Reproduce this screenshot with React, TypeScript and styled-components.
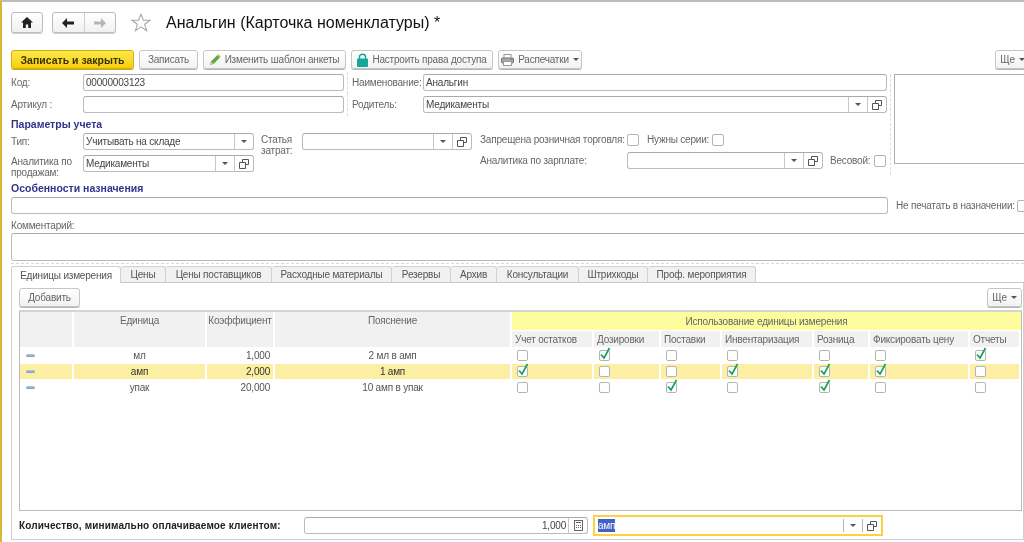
import React from 'react'
import styled, { createGlobalStyle } from 'styled-components'

const GlobalStyle = createGlobalStyle`
  html, body {
    margin: 0;
    padding: 0;
    background: #fff;
  }
  body {
    font-family: "Liberation Sans", Arial, sans-serif;
    font-size: 10px;
    letter-spacing: -0.2px;
    color: #555;
  }
`

const Page = styled.div`
  box-sizing: border-box;
  width: 1024px;
  height: 542px;
  overflow: hidden;
  background: #fff;
  border-top: 2px solid #bcbcbc;
  border-left: 2px solid #d6b92e;
  padding-left: 9px;
  filter: blur(0.45px);
`

const NavBar = styled.div`
  display: flex;
  align-items: center;
  height: 21px;
  margin-top: 10px;
`

const NavButton = styled.div<{ $w: number }>`
  box-sizing: border-box;
  width: ${p => p.$w}px;
  height: 21px;
  display: flex;
  align-items: center;
  justify-content: center;
  border: 1px solid #bdbdbd;
  border-radius: 3px;
  background: linear-gradient(#fff, #f1f1f1);
  box-shadow: 0 1px 0 #cfcfcf;
`

const NavGroup = styled.div`
  display: flex;
  width: 64px;
  margin-left: 9px;
  box-sizing: border-box;
  border: 1px solid #bdbdbd;
  border-radius: 3px;
  height: 21px;
  background: linear-gradient(#fff, #f1f1f1);
  box-shadow: 0 1px 0 #cfcfcf;
`

const NavCell = styled.div<{ $divided?: boolean }>`
  flex: 1;
  display: flex;
  align-items: center;
  justify-content: center;
  border-left: ${p => (p.$divided ? '1px solid #d0d0d0' : 'none')};
`

const StarBox = styled.div`
  margin-left: 15px;
  display: flex;
`

const Title = styled.h1`
  margin: 0 0 0 15px;
  font-size: 16px;
  font-weight: 400;
  letter-spacing: 0;
  color: #111;
  white-space: nowrap;
`

const Toolbar = styled.div`
  display: flex;
  align-items: center;
  height: 19px;
  margin-top: 17px;
  gap: 5px;
`

const Btn = styled.div<{ $w: number; $push?: boolean }>`
  box-sizing: border-box;
  flex: none;
  width: ${p => p.$w}px;
  height: 19px;
  margin-left: ${p => (p.$push ? 'auto' : '0')};
  display: flex;
  align-items: center;
  justify-content: center;
  gap: 4px;
  border: 1px solid #c6c6c6;
  border-radius: 3px;
  background: linear-gradient(#fff, #f2f2f2);
  box-shadow: 0 1px 0 #b4b4b4;
  color: #666;
  white-space: nowrap;
`

const PrimaryBtn = styled(Btn)`
  border-color: #d2ae10;
  background: linear-gradient(#fde84a, #f6cf10);
  color: #3a3200;
  font-weight: 700;
  font-size: 10.5px;
  letter-spacing: 0;
  box-shadow: 0 1px 0 #c9a90f;
`

// the window is narrower than the form, so this one runs off the right edge
const ClippedBtn = styled(Btn)`
  margin-right: -6px;
`

const Caret = styled.span`
  display: inline-block;
  width: 0;
  height: 0;
  border-left: 3px solid transparent;
  border-right: 3px solid transparent;
  border-top: 3px solid #555;
`

const Top = styled.div`
  display: flex;
  margin-top: 5px;
`

const FormColumn = styled.div`
  width: 877px;
  flex: none;
`

const Row = styled.div<{ $mt?: number; $h?: number }>`
  display: flex;
  align-items: center;
  height: ${p => p.$h ?? 17}px;
  margin-top: ${p => p.$mt ?? 0}px;
`

const Label = styled.div<{ $w?: number; $ml?: number }>`
  flex: none;
  width: ${p => (p.$w ? `${p.$w}px` : 'auto')};
  margin-left: ${p => p.$ml ?? 0}px;
  color: #666;
  line-height: 12px;
  white-space: nowrap;
`

const TallLabel = styled(Label)`
  align-self: flex-start;
  margin-top: 1px;
  line-height: 11px;
`

const VSep = styled.div`
  flex: none;
  width: 0;
  height: 22px;
  margin: -2px 4px -3px 3px;
  border-left: 1px dashed #ddd;
`

const Field = styled.div<{ $w: number; $h?: number }>`
  box-sizing: border-box;
  flex: none;
  display: flex;
  align-items: stretch;
  width: ${p => p.$w}px;
  height: ${p => p.$h ?? 17}px;
  border: 1px solid #bbb;
  border-top-color: #a9a9a9;
  border-radius: 3px;
  background: #fff;
  color: #444;
`

const FieldText = styled.div<{ $right?: boolean }>`
  flex: 1;
  min-width: 0;
  padding: 0 2px;
  display: flex;
  align-items: center;
  justify-content: ${p => (p.$right ? 'flex-end' : 'flex-start')};
`

const FieldBtn = styled.div`
  flex: none;
  width: 18px;
  display: flex;
  align-items: center;
  justify-content: center;
  border-left: 1px solid #c8c8c8;
`

const ImageBox = styled.div`
  box-sizing: border-box;
  width: 130px;
  height: 90px;
  margin-left: 5px;
  flex: none;
  border-left: 1px solid #b0b0b0;
  border-top: 1px solid #b0b0b0;
  border-bottom: 1px solid #b0b0b0;
  background: #fff;
`

const ImageSep = styled.div`
  flex: none;
  height: 101px;
  width: 0;
  margin-left: 2px;
  margin-right: -2px;
  border-left: 1px dashed #ddd;
`

const SectionTitle = styled.div<{ $mt: number }>`
  margin-top: ${p => p.$mt}px;
  color: #32328c;
  font-weight: 700;
  font-size: 10.5px;
  letter-spacing: 0;
  line-height: 12px;
`

const Params = styled.div`
  display: flex;
  margin-top: 2px;
`

const ParamCol = styled.div<{ $w: number; $ml?: number; $pt?: number }>`
  flex: none;
  width: ${p => p.$w}px;
  margin-left: ${p => p.$ml ?? 0}px;
  padding-top: ${p => p.$pt ?? 0}px;
`

const Box = styled.span<{ $s?: number }>`
  box-sizing: border-box;
  position: relative;
  flex: none;
  display: inline-block;
  width: ${p => p.$s ?? 12}px;
  height: ${p => p.$s ?? 12}px;
  border: 1px solid #b4b4b4;
  border-radius: 2px;
  background: #fff;
`

const CheckMark = styled.svg`
  position: absolute;
  left: -1px;
  top: -5px;
`

const Dashed = styled.div`
  margin-top: 2px;
  border-top: 1px dashed #d8d8d8;
`

const Tabs = styled.div`
  display: flex;
  margin-top: 2px;
  height: 17px;
`

const Tab = styled.div<{ $w: number; $active?: boolean }>`
  box-sizing: border-box;
  flex: none;
  width: ${p => p.$w}px;
  display: flex;
  align-items: center;
  justify-content: center;
  color: #555;
  white-space: nowrap;
  border: 1px solid #d0d0d0;
  border-left-width: ${p => (p.$active ? 1 : 0)}px;
  border-bottom: ${p => (p.$active ? 'none' : '1px solid #c8c8c8')};
  border-radius: 3px 3px 0 0;
  background: ${p => (p.$active ? '#fff' : '#f1f1f1')};
`

const TabRest = styled.div`
  flex: 1;
  border-bottom: 1px solid #c8c8c8;
`

const Panel = styled.div`
  box-sizing: border-box;
  width: 1013px;
  height: 257px;
  border: 1px solid #d0d0d0;
  border-top: none;
  padding: 5px 1px 0 7px;
`

const PanelBar = styled.div`
  display: flex;
  height: 18px;
`

const Grid = styled.div`
  box-sizing: border-box;
  width: 1003px;
  height: 201px;
  margin-top: 4px;
  border: 1px solid #bcbcbc;
  border-top-color: #d4d4d4;
  border-top-width: 2px;
`

const Columns = '54px 133px 68px 237px 82px 67px 61px 92px 56px 100px 51px'

const HeadGrid = styled.div`
  display: grid;
  grid-template-columns: ${Columns};
  grid-template-rows: 18px 17px;
  height: 35px;
`

const HeadCell = styled.div`
  grid-row: span 2;
  box-sizing: border-box;
  padding-top: 3px;
  text-align: center;
  background: #f1f1f1;
  border-right: 2px solid #fff;
  color: #666;
`

const GroupCell = styled.div`
  grid-column: 5 / span 7;
  display: flex;
  align-items: center;
  justify-content: center;
  background: #fdfd9d;
  color: #666;
`

const SubCell = styled.div`
  box-sizing: border-box;
  display: flex;
  align-items: center;
  padding-left: 3px;
  background: #f1f1f1;
  border-right: 2px solid #fff;
  border-top: 1px solid #fff;
  color: #666;
  white-space: nowrap;
`

const DataRow = styled.div`
  display: grid;
  grid-template-columns: ${Columns};
  height: 16px;
`

const DataCell = styled.div<{ $align?: string; $on?: boolean }>`
  box-sizing: border-box;
  height: 15px;
  margin-top: 1px;
  display: flex;
  align-items: center;
  justify-content: ${p => p.$align ?? 'center'};
  padding: 0 3px;
  background: ${p => (p.$on ? '#fcefa4' : '#fff')};
  border-right: 2px solid #fff;
  color: ${p => (p.$on ? '#333' : '#555')};
`

const BoxCell = styled(DataCell)`
  padding-left: 5px;
  justify-content: flex-start;
`

const Minus = styled.span`
  margin-left: 3px;
  width: 9px;
  height: 3px;
  border-radius: 2px;
  background: linear-gradient(#b4c6dc, #7f9cbd);
`

const Footer = styled.div`
  display: flex;
  align-items: center;
  height: 21px;
  margin-top: 4px;
`

const FooterLabel = styled.div`
  flex: none;
  width: 285px;
  color: #222;
  font-weight: 700;
  font-size: 10px;
  letter-spacing: 0.15px;
  white-space: nowrap;
`

const FocusField = styled.div`
  box-sizing: border-box;
  flex: none;
  display: flex;
  align-items: stretch;
  width: 290px;
  height: 21px;
  margin-left: 5px;
  padding: 2px 0;
  border: 2px solid #fbd341;
  background: #fff;
  color: #444;
`

const FocusText = styled(FieldText)`
  padding-left: 3px;
`

const Selected = styled.span`
  background: #3f62c4;
  color: #fff;
  padding: 1px 0;
`

const FocusBtn = styled(FieldBtn)`
  border-left: 1px solid #b5b5b5;
`

const OpenIcon = () => (
  <svg width="10" height="10" viewBox="0 0 10 10" fill="none" stroke="#555" strokeWidth="1">
    <path d="M3.5 0.5H9.5V5.5H3.5Z" />
    <path d="M.5 3.5H6.5V9.5H.5Z" fill="#fff" />
  </svg>
)

const Pick = () => (
  <>
    <FieldBtn>
      <Caret />
    </FieldBtn>
    <FieldBtn>
      <OpenIcon />
    </FieldBtn>
  </>
)

const Tick = () => (
  <CheckMark width="13" height="15" viewBox="0 0 13 15" fill="none">
    <path d="M2 8.5L5 12L10.5 2" stroke="#17a356" strokeWidth="1.7" />
  </CheckMark>
)

const HomeIcon = () => (
  <svg width="12" height="11" viewBox="0 0 12 11">
    <path d="M6 0L0 5.5H2V11H4.8V7.5H7.2V11H10V5.5H12Z" fill="#222" />
  </svg>
)

const ArrowIcon = ({ dir, color }: { dir: 'l' | 'r'; color: string }) => (
  <svg width="12" height="10" viewBox="0 0 12 10">
    <path
      d={dir === 'l' ? 'M0 5L5 0V3.5H12V6.5H5V10Z' : 'M12 5L7 0V3.5H0V6.5H7V10Z'}
      fill={color}
    />
  </svg>
)

const StarIcon = () => (
  <svg width="20" height="19" viewBox="0 0 20 19" fill="#fff" stroke="#a8a8a8" strokeWidth="1.1">
    <path d="M10 1.2L12.4 7.3H18.9L13.7 11.3L15.6 17.7L10 13.9L4.4 17.7L6.3 11.3L1.1 7.3H7.6Z" />
  </svg>
)

const PencilIcon = () => (
  <svg width="11" height="11" viewBox="0 0 11 11">
    <path d="M0 11L1 7.5L7.5 1L10 3.5L3.5 10Z" fill="#5fa83a" />
    <path d="M7.5 1L8.5 0L11 2.5L10 3.5Z" fill="#b7cf55" />
    <path d="M0 11L1 7.5L3.5 10Z" fill="#d8c9a0" />
  </svg>
)

const LockIcon = () => (
  <svg width="11" height="14" viewBox="0 0 11 14">
    <path d="M2.5 6V3.5C2.5 0.5 8.5 0.5 8.5 3.5V6" fill="none" stroke="#14a090" strokeWidth="1.4" />
    <rect x="0" y="5.5" width="11" height="8.5" rx="1" fill="#14a89a" />
  </svg>
)

const PrinterIcon = () => (
  <svg width="13" height="12" viewBox="0 0 13 12">
    <rect x="3" y="0.5" width="7" height="4" fill="#fff" stroke="#999" />
    <rect x="0.5" y="4" width="12" height="5" rx="1" fill="#a9a9a9" stroke="#777" />
    <rect x="2.5" y="7.5" width="8" height="4" fill="#fff" stroke="#999" />
    <rect x="9.5" y="5" width="2" height="1" fill="#d9534f" />
  </svg>
)

const CalcIcon = () => (
  <svg width="9" height="11" viewBox="0 0 9 11" fill="none" stroke="#666">
    <rect x="0.5" y="0.5" width="8" height="10" />
    <path d="M2 2.5H7" />
    <path d="M2 5.5H3M4 5.5H5M6 5.5H7M2 7.5H3M4 7.5H5M6 7.5H7" />
  </svg>
)

const tabs = [
  { title: 'Единицы измерения', w: 110, active: true },
  { title: 'Цены', w: 45 },
  { title: 'Цены поставщиков', w: 106 },
  { title: 'Расходные материалы', w: 120 },
  { title: 'Резервы', w: 59 },
  { title: 'Архив', w: 46 },
  { title: 'Консультации', w: 82 },
  { title: 'Штрихкоды', w: 69 },
  { title: 'Проф. мероприятия', w: 108 },
]

const useColumns = ['Учет остатков', 'Дозировки', 'Поставки', 'Инвентаризация', 'Розница', 'Фиксировать цену', 'Отчеты']

const rows = [
  { unit: 'мл', k: '1,000', note: '2 мл в амп', flags: [0, 1, 0, 0, 0, 0, 1] },
  { unit: 'амп', k: '2,000', note: '1 амп', flags: [1, 0, 0, 1, 1, 1, 0], on: true },
  { unit: 'упак', k: '20,000', note: '10 амп в упак', flags: [0, 0, 1, 0, 1, 0, 0] },
]

const App = () => {
  return (
    <Page>
      <GlobalStyle />
      <NavBar>
        <NavButton $w={32}>
          <HomeIcon />
        </NavButton>
        <NavGroup>
          <NavCell>
            <ArrowIcon dir="l" color="#222" />
          </NavCell>
          <NavCell $divided>
            <ArrowIcon dir="r" color="#b5b5b5" />
          </NavCell>
        </NavGroup>
        <StarBox>
          <StarIcon />
        </StarBox>
        <Title>Анальгин (Карточка номенклатуры) *</Title>
      </NavBar>

      <Toolbar>
        <PrimaryBtn $w={123}>Записать и закрыть</PrimaryBtn>
        <Btn $w={59}>Записать</Btn>
        <Btn $w={143}>
          <PencilIcon />
          Изменить шаблон анкеты
        </Btn>
        <Btn $w={142}>
          <LockIcon />
          Настроить права доступа
        </Btn>
        <Btn $w={84}>
          <PrinterIcon />
          Распечатки
          <Caret />
        </Btn>
        <ClippedBtn $w={35} $push>
          Ще
          <Caret />
        </ClippedBtn>
      </Toolbar>

      <Top>
        <FormColumn>
          <Row>
            <Label $w={72}>Код:</Label>
            <Field $w={261}>
              <FieldText>00000003123</FieldText>
            </Field>
            <VSep />
            <Label $w={71}>Наименование:</Label>
            <Field $w={464}>
              <FieldText>Анальгин</FieldText>
            </Field>
          </Row>
          <Row $mt={5}>
            <Label $w={72}>Артикул :</Label>
            <Field $w={261} />
            <VSep />
            <Label $w={71}>Родитель:</Label>
            <Field $w={464}>
              <FieldText>Медикаменты</FieldText>
              <Pick />
            </Field>
          </Row>
          <SectionTitle $mt={5}>Параметры учета</SectionTitle>
          <Params>
            <ParamCol $w={243}>
              <Row $mt={1}>
                <Label $w={72}>Тип:</Label>
                <Field $w={171}>
                  <FieldText>Учитывать на складе</FieldText>
                  <FieldBtn>
                    <Caret />
                  </FieldBtn>
                </Field>
              </Row>
              <Row $mt={5}>
                <TallLabel $w={72}>
                  Аналитика по
                  <br />
                  продажам:
                </TallLabel>
                <Field $w={171}>
                  <FieldText>Медикаменты</FieldText>
                  <Pick />
                </Field>
              </Row>
            </ParamCol>
            <ParamCol $w={211} $ml={7} $pt={1}>
              <Row>
                <TallLabel $w={41}>
                  Статья
                  <br />
                  затрат:
                </TallLabel>
                <Field $w={170}>
                  <FieldText />
                  <Pick />
                </Field>
              </Row>
            </ParamCol>
            <ParamCol $w={407} $ml={8} $pt={2}>
              <Row $h={12}>
                <Label $w={147}>Запрещена розничная торговля:</Label>
                <Box />
                <Label $w={65} $ml={8}>
                  Нужны серии:
                </Label>
                <Box />
              </Row>
              <Row $mt={6}>
                <Label $w={147}>Аналитика по зарплате:</Label>
                <Field $w={196}>
                  <FieldText />
                  <Pick />
                </Field>
                <Label $w={44} $ml={7}>
                  Весовой:
                </Label>
                <Box />
              </Row>
            </ParamCol>
          </Params>
        </FormColumn>
        <ImageSep />
        <ImageBox />
      </Top>

      <SectionTitle $mt={7}>Особенности назначения</SectionTitle>
      <Row $mt={3}>
        <Field $w={877} />
        <Label $w={121} $ml={8}>
          Не печатать в назначении:
        </Label>
        <Box />
      </Row>
      <Row $mt={6} $h={12}>
        <Label>Комментарий:</Label>
      </Row>
      <Row $mt={1} $h={28}>
        <Field $w={1020} $h={28} />
      </Row>
      <Dashed />

      <Tabs>
        {tabs.map(t => (
          <Tab key={t.title} $w={t.w} $active={t.active}>
            {t.title}
          </Tab>
        ))}
        <TabRest />
      </Tabs>

      <Panel>
        <PanelBar>
          <Btn $w={61}>Добавить</Btn>
          <Btn $w={35} $push>
            Ще
            <Caret />
          </Btn>
        </PanelBar>
        <Grid>
          <HeadGrid>
            <HeadCell />
            <HeadCell>Единица</HeadCell>
            <HeadCell>Коэффициент</HeadCell>
            <HeadCell>Пояснение</HeadCell>
            <GroupCell>Использование единицы измерения</GroupCell>
            {useColumns.map(c => (
              <SubCell key={c}>{c}</SubCell>
            ))}
          </HeadGrid>
          {rows.map(r => (
            <DataRow key={r.unit}>
              <DataCell $on={r.on} $align="flex-start">
                <Minus />
              </DataCell>
              <DataCell $on={r.on}>{r.unit}</DataCell>
              <DataCell $on={r.on} $align="flex-end">
                {r.k}
              </DataCell>
              <DataCell $on={r.on}>{r.note}</DataCell>
              {r.flags.map((f, i) => (
                <BoxCell key={i} $on={r.on}>
                  <Box $s={11}>{f ? <Tick /> : null}</Box>
                </BoxCell>
              ))}
            </DataRow>
          ))}
        </Grid>
        <Footer>
          <FooterLabel>Количество, минимально оплачиваемое клиентом:</FooterLabel>
          <Field $w={284}>
            <FieldText $right>1,000</FieldText>
            <FieldBtn>
              <CalcIcon />
            </FieldBtn>
          </Field>
          <FocusField>
            <FocusText>
              <Selected>амп</Selected>
            </FocusText>
            <FocusBtn>
              <Caret />
            </FocusBtn>
            <FocusBtn>
              <OpenIcon />
            </FocusBtn>
          </FocusField>
        </Footer>
      </Panel>
    </Page>
  )
}

export default App
